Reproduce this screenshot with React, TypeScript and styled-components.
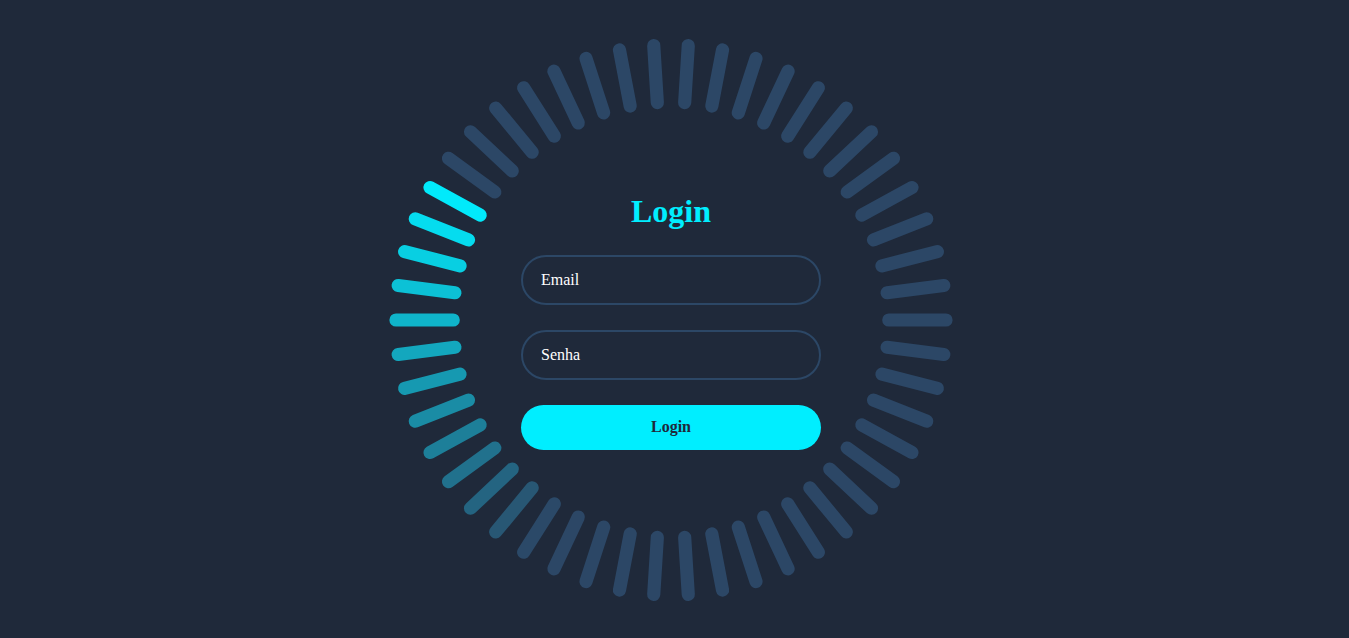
import React from "react";
import styled, { createGlobalStyle } from "styled-components";

const GlobalStyle = createGlobalStyle`
  html, body {
    margin: 0;
    padding: 0;
    background: #1f293a;
  }
  * { box-sizing: border-box; }
`;

const Page = styled.div`
  min-height: 100vh;
  display: grid;
  place-items: center;
  padding: 2px 7px 0 0;
  font-family: "Liberation Serif", "Times New Roman", serif;
`;

const Stage = styled.div`
  display: grid;
  width: 564px;
  height: 564px;
  & > * {
    grid-area: 1 / 1;
  }
`;

const Ring = styled.svg`
  width: 564px;
  height: 564px;
  display: block;
`;

const LoginBox = styled.div`
  align-self: center;
  justify-self: center;
  width: 300px;
  display: flex;
  flex-direction: column;
  gap: 25px;
  padding-top: 2px;
`;

const Title = styled.h2`
  margin: 0;
  font-size: 32px;
  line-height: 37px;
  font-weight: 700;
  color: #00eeff;
  text-align: center;
`;

const Input = styled.input`
  width: 100%;
  height: 50px;
  background: transparent;
  border: 2px solid #2c4766;
  border-radius: 40px;
  outline: none;
  padding: 0 18px;
  font-family: inherit;
  font-size: 16px;
  color: #fff;
  &::placeholder {
    color: #fff;
    opacity: 1;
  }
`;

const Button = styled.button`
  width: 100%;
  height: 45px;
  border: none;
  border-radius: 40px;
  background: #00eeff;
  color: #1f293a;
  font-family: inherit;
  font-size: 16px;
  font-weight: 700;
  cursor: pointer;
`;

const CYAN = [0, 238, 255];
const DIM = [44, 71, 102];

function barColor(i: number): string {
  const k = (((4 - i) % 50) + 50) % 50;
  const f = Math.min(1, (0.02 + 0.06 * k) / 0.75);
  const c = CYAN.map((v, j) => Math.round(v + (DIM[j] - v) * f));
  return `rgb(${c[0]},${c[1]},${c[2]})`;
}

const C = 282;
const R1 = 217.8;
const R2 = 275;

export default function App() {
  const bars = Array.from({ length: 50 }, (_, i) => {
    const a = (7.2 * i * Math.PI) / 180;
    const dx = -Math.cos(a);
    const dy = -Math.sin(a);
    return (
      <line
        key={i}
        x1={C + dx * R1}
        y1={C + dy * R1}
        x2={C + dx * R2}
        y2={C + dy * R2}
        stroke={barColor(i)}
        strokeWidth={13.2}
        strokeLinecap="round"
      />
    );
  });

  return (
    <>
      <GlobalStyle />
      <Page>
        <Stage>
          <Ring viewBox="0 0 564 564">{bars}</Ring>
          <LoginBox>
            <Title>Login</Title>
            <Input type="email" placeholder="Email" />
            <Input type="password" placeholder="Senha" />
            <Button>Login</Button>
          </LoginBox>
        </Stage>
      </Page>
    </>
  );
}
